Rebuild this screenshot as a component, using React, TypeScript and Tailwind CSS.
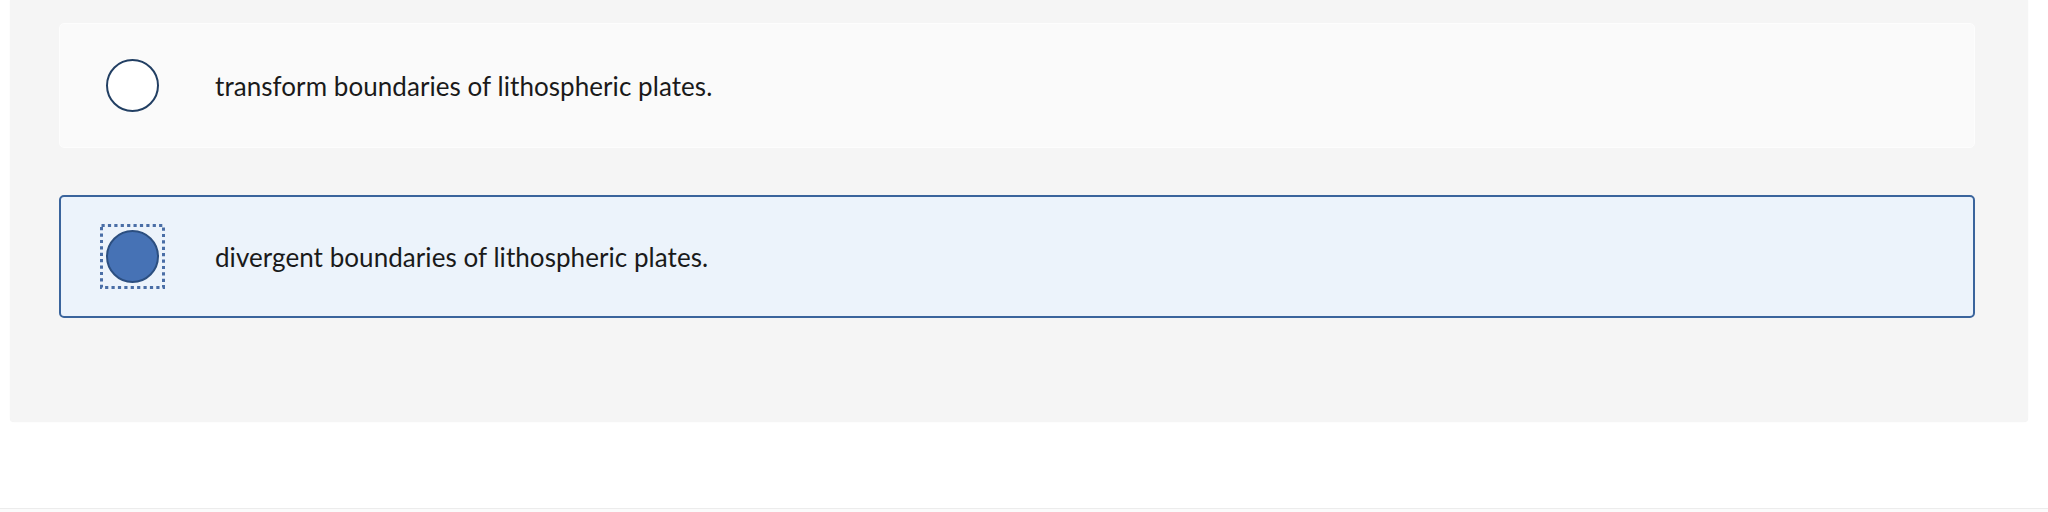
function Radio({ checked }: { checked: boolean }) {
  if (!checked) {
    return (
      <span className="block w-[53px] h-[53px] shrink-0 rounded-full border-2 border-[#223f63] bg-white" />
    );
  }
  return (
    <span className="relative block w-[53px] h-[53px] shrink-0">
      <span className="block w-full h-full rounded-full border-2 border-[#2c4f80] bg-[#4672b5]" />
      {/* focus ring */}
      <svg
        className="absolute -left-[6px] -top-[6px]"
        width="65"
        height="65"
        viewBox="0 0 65 65"
      >
        <rect
          x="1.5"
          y="1.5"
          width="62"
          height="62"
          fill="none"
          stroke="#4a6ea6"
          strokeWidth="3"
          strokeDasharray="3.2 3.2"
        />
      </svg>
    </span>
  );
}

function Choice({ label, checked }: { label: string; checked: boolean }) {
  return (
    <div
      className={`flex items-center w-[1916px] rounded-[5px] ${
        checked
          ? "h-[123px] border-2 border-[#3a649c] bg-[#ecf3fb] pl-[45px]"
          : "h-[125px] border border-[#fdfdfd] bg-[#fafafa] pl-[46px]"
      }`}
    >
      <Radio checked={checked} />
      <span className="ml-[56px] text-[26px] leading-none tracking-[0.06px] text-[#1a1a1a] font-['Lato',sans-serif]">
        {label}
      </span>
    </div>
  );
}

export default function App() {
  return (
    <div className="w-[2048px] h-[512px] bg-white flex flex-col">
      {/* Question panel */}
      <div className="ml-[10px] w-[2018px] h-[422px] bg-[#f5f5f5] rounded-b-[4px] shadow-[0_0_1px_rgba(0,0,0,0.08)] pl-[49px] pt-[23px]">
        <Choice label="transform boundaries of lithospheric plates." checked={false} />
        <div className="mt-[47px]">
          <Choice label="divergent boundaries of lithospheric plates." checked={true} />
        </div>
      </div>
      <div className="flex-1" />
      <div className="h-[4px] border-t border-[#ececec] bg-[#fbfbfb]" />
    </div>
  );
}
